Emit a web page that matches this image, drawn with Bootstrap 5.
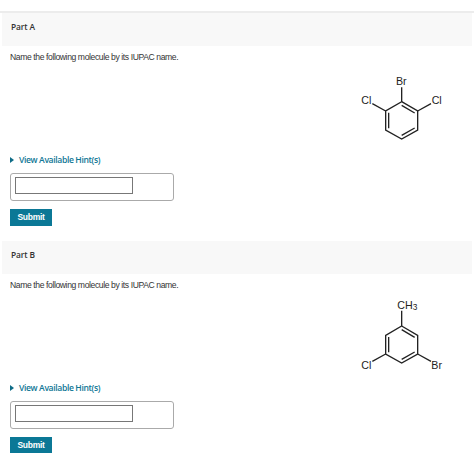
<!DOCTYPE html>
<html lang="en">
<head>
    <meta charset="UTF-8">
    <meta name="viewport" content="width=device-width, initial-scale=1.0">
    <link href="https://cdn.jsdelivr.net/npm/bootstrap@5.3.3/dist/css/bootstrap.min.css" rel="stylesheet">
    <title>Naming Molecules</title>
    <style>
        body {
            font-family: "Liberation Sans", Arial, sans-serif;
            font-size: 8.6px;
            line-height: 12px;
            color: #333;
            background-color: #fff;
        }

        .page {
            height: 453px;
            padding-top: 11px;
        }

        .top-rule {
            height: 2px;
            background-color: #ececec;
        }

        .part {
            height: 228px;
        }

        .part-header {
            height: 33px;
            margin: 0 2px;
            padding: 0 9px 5px;
            background-color: #f8f8f8;
            font-family: "Open Sans", sans-serif;
            font-size: 8.4px;
            font-weight: 600;
            letter-spacing: -0.1px;
        }

        .part-body {
            padding: 0 14px 0 10px;
        }

        .question {
            height: 108px;
            padding-top: 5px;
        }

        .question-text {
            letter-spacing: -0.4px;
        }

        .molecule {
            margin-top: 14px;
        }

        .molecule path {
            fill: none;
            stroke: #222;
            stroke-width: 4;
        }

        .molecule text {
            font-size: 32px;
            fill: #222;
        }

        .molecule .subscript {
            font-size: 25px;
        }

        .hint {
            height: 19px;
            color: #0f7795;
            font-family: "Open Sans", sans-serif;
            font-size: 8.6px;
            font-weight: 600;
            letter-spacing: -0.37px;
        }

        .hint svg {
            width: 4px;
            height: 6px;
            margin-right: 5px;
            fill: #0f6c87;
        }

        .answer-box {
            width: 164px;
            height: 28px;
            padding: 3px 4px;
            border: 1px solid #aaa;
            border-radius: 3px;
        }

        .answer-input {
            width: 118px;
            height: 17px;
            border: 1px solid #777;
            font-size: 9px;
        }

        .btn-answer {
            width: 42px;
            height: 17px;
            margin-top: 7.5px;
            background-color: #0b7896;
            color: #fff;
            font-size: 8.5px;
            font-weight: 700;
            line-height: 17px;
            letter-spacing: -0.3px;
        }

        .btn-answer:hover {
            background-color: #075f78;
            color: #fff;
        }
    </style>
</head>
<body>

<main class="page overflow-hidden">
    <div class="top-rule"></div>

    <!-- Part A -->
    <section class="part">
        <div class="part-header d-flex align-items-center">Part A</div>
        <div class="part-body">
            <div class="question d-flex justify-content-between">
                <div class="question-text text-nowrap">Name the following molecule by its IUPAC name.</div>
                <svg class="molecule flex-shrink-0" width="110" height="85" viewBox="0 0 330 255">
                    <path d="M155 110 L203 138 V195 L155 222 L107 195 V138 Z"/>
                    <path d="M116 143 V190 M155 121 L194 144 M194 189 L155 211"/>
                    <path d="M155 110 V67 M107 138 L67 116 M203 138 L243 116"/>
                    <text x="138" y="60">Br</text>
                    <text x="34" y="116">Cl</text>
                    <text x="245" y="116">Cl</text>
                </svg>
            </div>
            <div class="hint d-flex align-items-center pb-2">
                <svg viewBox="0 0 4 6"><path d="M0 0 L4 3 L0 6 Z"/></svg>View Available Hint(s)
            </div>
            <div class="answer-box">
                <input type="text" class="answer-input d-block rounded-0 p-0" aria-label="Part A answer">
            </div>
            <button type="button" class="btn btn-answer d-block border-0 rounded-0 p-0">Submit</button>
        </div>
    </section>

    <!-- Part B -->
    <section class="part">
        <div class="part-header d-flex align-items-center">Part B</div>
        <div class="part-body">
            <div class="question d-flex justify-content-between">
                <div class="question-text text-nowrap">Name the following molecule by its IUPAC name.</div>
                <svg class="molecule flex-shrink-0" width="110" height="85" viewBox="0 9 330 255">
                    <path d="M155 108 L203 136 V192 L155 219 L107 192 V136 Z"/>
                    <path d="M116 141 V187 M155 119 L194 142 M194 186 L155 208"/>
                    <path d="M155 108 V62 M107 192 L67 214 M203 192 L243 214"/>
                    <text x="142" y="56">CH<tspan class="subscript" dy="3">3</tspan></text>
                    <text x="34" y="236">Cl</text>
                    <text x="244" y="236">Br</text>
                </svg>
            </div>
            <div class="hint d-flex align-items-center pb-2">
                <svg viewBox="0 0 4 6"><path d="M0 0 L4 3 L0 6 Z"/></svg>View Available Hint(s)
            </div>
            <div class="answer-box">
                <input type="text" class="answer-input d-block rounded-0 p-0" aria-label="Part B answer">
            </div>
            <button type="button" class="btn btn-answer d-block border-0 rounded-0 p-0">Submit</button>
        </div>
    </section>
</main>

<script src="https://cdn.jsdelivr.net/npm/bootstrap@5.3.3/dist/js/bootstrap.bundle.min.js"></script>
</body>
</html>
